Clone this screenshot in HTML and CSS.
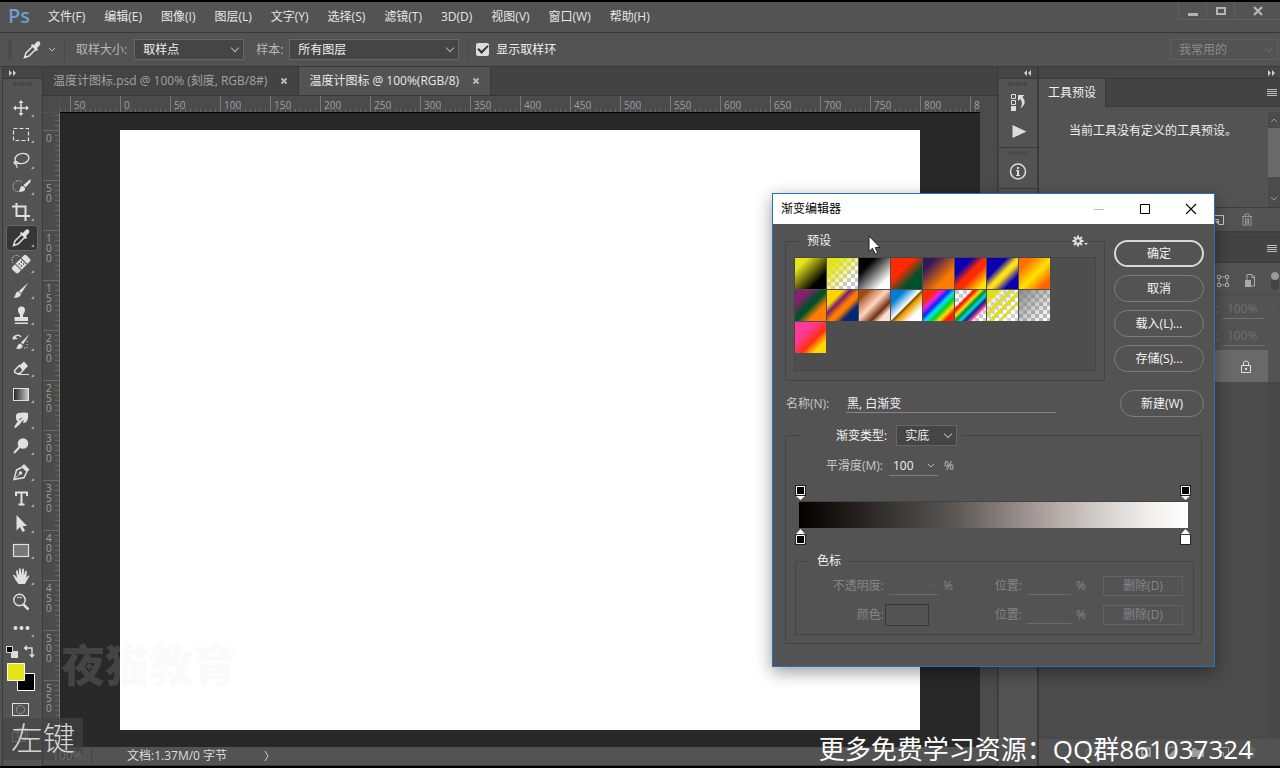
FILE: index.html
```html
<!DOCTYPE html>
<html lang="zh-CN">
<head>
<meta charset="utf-8">
<title>Ps</title>
<link rel="stylesheet" href="styles.css">
</head>
<body>
<div class="app">
  <header class="menubar">
    <span class="logo">Ps</span>
    <nav class="menus">
      <button>文件(F)</button><button>编辑(E)</button><button>图像(I)</button><button>图层(L)</button><button>文字(Y)</button><button>选择(S)</button><button>滤镜(T)</button><button>3D(D)</button><button>视图(V)</button><button>窗口(W)</button><button>帮助(H)</button>
    </nav>
    <div class="winbtns">
      <button aria-label="最小化"><svg width="12" height="12"><path d="M1 8h10v3H1z" fill="#b4b4b4"/></svg></button>
      <button aria-label="最大化"><svg width="12" height="12"><path d="M2 3h8v6H2z" fill="none" stroke="#b4b4b4" stroke-width="2"/></svg></button>
      <button class="wide" aria-label="关闭"><svg width="12" height="12"><path d="M2 2l8 8M10 2l-8 8" stroke="#b4b4b4" stroke-width="2.4"/></svg></button>
    </div>
  </header>

  <div class="options">
    <span class="vgrip"></span>
    <svg class="opt-tool" width="20" height="20" viewBox="0 0 20 20"><path d="M11 6L4 13l-1.500 4.500L7 16l7-7" fill="none" stroke="#e0e0e0" stroke-width="1.500"/><path d="M10 4l2 1 2.500-3q2-1.500 3.300 0 1.400 1.500-.3 3.500L15 8l1 2-1.500 1L9 5.500z" fill="#e0e0e0"/></svg>
    <svg class="opt-chev" width="8" height="6"><path d="M1 1l3 3 3-3" fill="none" stroke="#c0c0c0"/></svg>
    <span class="sep"></span>
    <label for="size">取样大小:</label>
    <span class="pick size"><select id="size" class="drop"><option>取样点</option></select></span>
    <label for="sample">样本:</label>
    <span class="pick sample"><select id="sample" class="drop"><option>所有图层</option></select></span>
    <span class="sep short"></span>
    <input type="checkbox" id="ring" class="check" checked>
    <label for="ring" class="bright">显示取样环</label>
    <span class="pick workspace"><select class="drop" aria-label="工作区"><option>我常用的</option></select></span>
  </div>

  <div class="main">
    <aside class="toolbox">
      <div class="colhead"><svg width="8" height="6"><path d="M1 0l3 3-3 3zM5 0l3 3-3 3z" fill="#cfcfcf"/></svg></div>
      <span class="hgrip"></span>
      <div class="tools">
        <button aria-label="移动"><svg viewBox="0 0 20 20"><path d="M10 3v14M3 10h14" stroke="#e0e0e0" stroke-width="1.500"/><path d="M10 2L7.500 5h5zM10 18l-2.500-3h5zM2 10l3-2.500v5zM18 10l-3-2.500v5z" fill="#e0e0e0"/></svg></button>
        <button aria-label="选框"><svg viewBox="0 0 20 20"><rect x="2.500" y="4.500" width="15" height="12" fill="none" stroke="#e0e0e0" stroke-width="1.200" stroke-dasharray="4 2"/></svg></button>
        <button aria-label="套索"><svg viewBox="0 0 20 20"><ellipse cx="11" cy="8.500" rx="7" ry="5" fill="none" stroke="#e0e0e0" stroke-width="1.400" transform="rotate(-12 11 8.500)"/><path d="M5 11q-3 1-1.500 2.500T7 13q-2-3-3 0 2 2 2 5" fill="none" stroke="#e0e0e0" stroke-width="1.200"/></svg></button>
        <button aria-label="快速选择"><svg viewBox="0 0 20 20"><path d="M11 6a5.500 5.500 0 1 0-2 9.500" fill="none" stroke="#e0e0e0" stroke-dasharray="1.200 1.200"/><path d="M19.500 3l-7 6 2 2.500 5-5.500zM12 10q-2.500-.5-3 2.500 0 2-1.500 2.700 3 1.300 5.500-.2 1.500-1 1-3z" fill="#e0e0e0"/></svg></button>
        <button aria-label="裁剪"><svg viewBox="0 0 20 20"><path d="M5.500 1v13H14M1 4.500h13.500V19M15 14h4" fill="none" stroke="#e0e0e0" stroke-width="2"/></svg></button>
        <button class="on" aria-label="吸管"><svg viewBox="0 0 20 20"><path d="M11 6L4 13l-1.500 4.500L7 16l7-7" fill="none" stroke="#e0e0e0" stroke-width="1.500"/><path d="M10 4l2 1 2.500-3q2-1.500 3.300 0 1.400 1.500-.3 3.500L15 8l1 2-1.500 1L9 5.500z" fill="#e0e0e0"/></svg></button>
        <button aria-label="修复画笔"><svg viewBox="0 0 20 20"><path d="M2 9a4.500 4.500 0 0 1 7-6" fill="none" stroke="#e0e0e0" stroke-dasharray="1.200 1.200"/><g transform="rotate(-45 10 10)"><rect x="0" y="6" width="20" height="8.500" rx="2" fill="#e0e0e0"/><path d="M6 6v8.500M14 6v8.500" stroke="#4a4a4a"/><path d="M8 8h1.500v1.500H8zM11 8h1.500v1.500H11zM8 11h1.500v1.500H8zM11 11h1.500v1.500H11z" fill="#4a4a4a"/></g></svg></button>
        <button aria-label="画笔"><svg viewBox="0 0 20 20"><path d="M17.500 2.500L8 11l2.200 2.300zM7.500 11.500q-2.500 0-3 3Q4 17 2 17.500q4 1 6.500-1 2-1.500 1.200-3z" fill="#e0e0e0"/></svg></button>
        <button aria-label="图章"><svg viewBox="0 0 20 20"><path d="M9 9q-2.500-3-2-5a3.500 3.500 0 0 1 7 0q0 2-2 5v2h5v4H3.500v-4H9zM4 16.500h13V18H4z" fill="#e0e0e0"/></svg></button>
        <button aria-label="历史画笔"><svg viewBox="0 0 20 20"><path d="M18.500 2L10 10.500l2 2zM9.500 11.500q-2.500 0-3 2.500-.5 2-2 2.500 4 1 6-.5 1.500-1 1-2.500z" fill="#e0e0e0"/><path d="M2 6q5-5 8-1" fill="none" stroke="#e0e0e0" stroke-width="1.300"/><path d="M1 7.500l6-.5-4-3z" fill="#e0e0e0"/><path d="M16 9v7h-4" fill="none" stroke="#e0e0e0" stroke-dasharray="1 2"/></svg></button>
        <button aria-label="橡皮擦"><svg viewBox="0 0 20 20"><path d="M4 12l4.500-4.500 4 4L9 15.500H5.500L3.500 14z" fill="none" stroke="#e0e0e0" stroke-width="1.500"/><path d="M8 8l5-4.500 4 4.500-5 5z" fill="#e0e0e0"/><path d="M7 16.500h11" stroke="#e0e0e0"/></svg></button>
        <button aria-label="渐变"><svg viewBox="0 0 20 20"><defs><linearGradient id="tg"><stop stop-color="#222"/><stop offset="1" stop-color="#ccc"/></linearGradient></defs><rect x="2.500" y="4.500" width="15" height="12" fill="url(#tg)" stroke="#e0e0e0"/></svg></button>
        <button aria-label="涂抹"><svg viewBox="0 0 20 20"><path d="M5 5q1-2.500 5-2.300 4.500-.7 7 .3.500 5-1 8-1.500 2.500-4 2 1-2 .5-3Q10 12 9 14l-4.500 4q-1.500 0-1-1.700L7 11q-2.500 0-2-6z" fill="#e0e0e0"/><path d="M8 10l3-2" stroke="#555"/></svg></button>
        <button aria-label="减淡"><svg viewBox="0 0 20 20"><circle cx="12" cy="7.500" r="5.300" fill="#e0e0e0"/><path d="M8.500 11L3 17" stroke="#e0e0e0" stroke-width="2"/></svg></button>
        <button aria-label="钢笔"><svg viewBox="0 0 20 20"><path d="M3 17.500L5.500 8l6-3 4.500 4.500-3 6z" fill="none" stroke="#e0e0e0" stroke-width="1.500"/><path d="M11 4l2-2 5.500 5.500-2 2z" fill="#e0e0e0"/><path d="M3 17.500l6-6" stroke="#e0e0e0"/><circle cx="9.500" cy="11" r="1.700" fill="#e0e0e0"/></svg></button>
        <button aria-label="文字"><svg viewBox="0 0 20 20"><path d="M5 8V4.500h11V8M10.500 4v12M7.500 16.500h6" fill="none" stroke="#e0e0e0" stroke-width="2"/></svg></button>
        <button aria-label="路径选择"><svg viewBox="0 0 20 20"><path d="M5.500 1v15.500l3.500-3.500 2.500 5 2.500-1.200-2.400-4.800h4.400z" fill="#e0e0e0"/></svg></button>
        <button aria-label="矩形"><svg viewBox="0 0 20 20"><rect x="2.500" y="4.500" width="15" height="12" fill="#777" stroke="#e0e0e0" stroke-width="1.200"/></svg></button>
        <button aria-label="抓手"><svg viewBox="0 0 20 20"><path d="M2 9q1.500-.6 2.500 1L6 12 5 5q1-1.500 1.800 0L8 9.500V3q1-1.300 1.800 0L10.300 9l1-6q1.200-1 1.700.2L12.800 9.500 14.300 5q1.200-.8 1.500.3L15.300 12l1.500-2q1.300-1 1.700 0Q15.500 15 14 18H7.500Q4.500 15 2 9z" fill="#e0e0e0"/></svg></button>
        <button class="plain" aria-label="缩放"><svg viewBox="0 0 20 20"><circle cx="8.500" cy="8" r="5.700" fill="none" stroke="#e0e0e0" stroke-width="1.500"/><path d="M12.500 12.500l5 5" stroke="#e0e0e0" stroke-width="2.500"/><path d="M6 6q2-2 5 0" fill="none" stroke="#e0e0e0"/></svg></button>
        <button aria-label="更多"><svg viewBox="0 0 20 20"><g fill="#e0e0e0"><circle cx="4.500" cy="10" r="2"/><circle cx="10.500" cy="10" r="2"/><circle cx="16.500" cy="10" r="2"/></g></svg></button>
      </div>
      <svg class="colors" viewBox="0 0 37 98">
        <path d="M8 10h7v7H8z" fill="#ddd"/><path d="M3.500 5.500h6v6h-6z" fill="#000" stroke="#ddd"/>
        <path d="M23 7h6v7" fill="none" stroke="#ddd" stroke-width="1.400"/><path d="M20.500 7l3.500-3v6zM29 17l-3-3.500h6z" fill="#ddd"/>
        <path d="M14.500 32.500h17v17h-17z" fill="#000" stroke="#fff"/><path d="M4.500 22.500h17v17h-17z" fill="#e4e41a" stroke="#fff"/>
        <rect x="9.500" y="62.500" width="16" height="12" fill="none" stroke="#e0e0e0"/><circle cx="17.500" cy="68.500" r="4" fill="none" stroke="#e0e0e0" stroke-dasharray="1 1.200"/>
        <g opacity=".6"><rect x="9.500" y="91.500" width="13" height="9" fill="none" stroke="#ddd"/><rect x="14.500" y="87.500" width="10" height="9" fill="none" stroke="#ddd"/></g>
      </svg>
    </aside>

    <main class="doc">
      <div class="tabs">
        <div class="tab"><span>温度计图标.psd @ 100% (刻度, RGB/8#)</span><button aria-label="关闭标签"><svg width="8" height="8"><path d="M1.500 1.500l5 5M6.500 1.500l-5 5" stroke="#bbb" stroke-width="1.800"/></svg></button></div>
        <div class="tab active"><span>温度计图标 @ 100%(RGB/8)</span><button aria-label="关闭标签"><svg width="8" height="8"><path d="M1.500 1.500l5 5M6.500 1.500l-5 5" stroke="#bbb" stroke-width="1.800"/></svg></button></div>
      </div>
      <div class="work">
        <div class="corner"></div>
        <div class="hruler"><i class="lead"></i><span>50</span><span>0</span><span>50</span><span>100</span><span>150</span><span>200</span><span>250</span><span>300</span><span>350</span><span>400</span><span>450</span><span>500</span><span>550</span><span>600</span><span>650</span><span>700</span><span>750</span><span>800</span><span>8</span></div>
        <div class="filler"></div>
        <div class="vruler"><i class="lead"></i><span>0</span><span>50</span><span>100</span><span>150</span><span>200</span><span>250</span><span>300</span><span>350</span><span>400</span><span>450</span><span>500</span><span>550</span><span></span></div>
        <div class="stage"><div class="artboard"></div><div class="mark">夜猫教育</div></div>
        <div class="filler"></div>
      </div>
      <footer class="status"><span class="zoom">100%</span><span class="size-info">文档:1.37M/0 字节</span><svg width="6" height="12"><path d="M1 1l3 5-3 5" fill="none" stroke="#ccc"/></svg></footer>
    </main>

    <aside class="strip">
      <div class="colhead end"><svg width="8" height="6"><path d="M3 0L0 3l3 3zM7 0L4 3l3 3z" fill="#cfcfcf"/></svg></div>
      <div class="group">
        <span class="hgrip"></span>
        <button aria-label="历史记录"><svg width="18" height="18"><path d="M2.500 1.500h4v4h-4zM2.500 7.500h4v4h-4z" fill="none" stroke="#ddd"/><path d="M2 13h5v5H2z" fill="#ddd"/><path d="M9 2h6.500l-2 2q5 6-1.500 11-1 0 0-1 2-4-.5-8L9 8z" fill="#ddd"/></svg></button>
        <button aria-label="动作"><svg width="18" height="18"><path d="M3.500 2l14 6.500-14 6.500z" fill="#ddd"/></svg></button>
      </div>
      <div class="group">
        <span class="hgrip"></span>
        <button class="tall" aria-label="信息"><svg width="18" height="18"><circle cx="9" cy="8.500" r="7.500" fill="none" stroke="#ddd" stroke-width="1.500"/><path d="M8 4h2v2H8zM7 7h3v5h1v1H7v-1h1V8H7z" fill="#ddd"/></svg></button>
      </div>
    </aside>

    <aside class="panels">
      <div class="colhead end"><svg width="8" height="6"><path d="M1 0l3 3-3 3zM5 0l3 3-3 3z" fill="#cfcfcf"/></svg></div>
      <section class="presets-panel">
        <div class="ptabs"><h2>工具预设</h2><button aria-label="面板菜单"><svg width="10" height="8"><path d="M0 .5h10M0 2.500h10M0 4.500h10M0 6.500h10" stroke="#bbb"/></svg></button></div>
        <div class="pbody"><p>当前工具没有定义的工具预设<span class="mid">。</span></p>
          <div class="scroll"><svg width="8" height="5"><path d="M1 4l3-3 3 3" fill="none" stroke="#999"/></svg><i></i><svg width="8" height="5"><path d="M1 1l3 3 3-3" fill="none" stroke="#999"/></svg></div></div>
        <div class="pfoot"><button aria-label="新建预设"><svg width="14" height="14"><path d="M1.500 2.500h10v9h-5v-5h-5z" fill="none" stroke="#ccc"/><path d="M3 8l3.500 3.500V8z" fill="#ccc"/></svg></button><button aria-label="删除预设"><svg width="12" height="13"><path d="M1 3.500h10M4 3V1h4v2M2 4v8h8V4M4.500 5v6M6 5v6M7.500 5v6" fill="none" stroke="#999"/></svg></button></div>
      </section>
      <section class="layers">
        <div class="ptabs"><button aria-label="图层菜单"><svg width="10" height="8"><path d="M0 .5h10M0 2.500h10M0 4.500h10M0 6.500h10" stroke="#bbb"/></svg></button></div>
        <div class="filters">
          <svg width="12" height="12"><path d="M2 2h8v8H2z" fill="none" stroke="#aaa"/><path d="M.5.5h3v3h-3zM8.500.5h3v3h-3zM.5 8.500h3v3h-3zM8.500 8.500h3v3h-3z" fill="#535353" stroke="#aaa"/></svg>
          <svg width="12" height="13"><path d="M3 6V.5h5L10.500 3v9H7M8 1v2.500h3" fill="none" stroke="#aaa"/><path d="M1 6h6v7H1z" fill="#aaa"/></svg>
          <svg width="8" height="18"><rect width="8" height="18" rx="4" fill="#444"/><circle cx="4" cy="4" r="4" fill="#999"/></svg>
        </div>
        <div class="percent"><label for="op">:</label><input id="op" value="100%" disabled><svg width="8" height="5"><path d="M1 1l3 3 3-3" fill="none" stroke="#626262"/></svg></div>
        <div class="percent"><label for="fill">:</label><input id="fill" value="100%" disabled><svg width="8" height="5"><path d="M1 1l3 3 3-3" fill="none" stroke="#626262"/></svg></div>
        <div class="layer"><svg width="12" height="13"><path d="M1.500 5.500h9v7h-9zM3.500 5V3q0-2 2.500-2t2.500 2v2" fill="none" stroke="#ddd"/><path d="M5 8h2v2H5z" fill="#ddd"/></svg></div>
        <div class="space"></div>
        <div class="lfoot">
          <svg width="14" height="12"><path d="M6 3H3a3 3 0 0 0 0 6h3M8 3h3a3 3 0 0 1 0 6H8M4 6h6" fill="none" stroke="#888"/></svg>
          <svg width="12" height="12"><path d="M2 3l7 7M9 3l-7 7" stroke="#777"/></svg>
          <svg width="12" height="12"><path d="M1 1h10v10H1z" fill="#ccc"/><circle cx="6" cy="6" r="3" fill="#555"/></svg>
          <svg width="12" height="12"><circle cx="6" cy="6" r="5" fill="none" stroke="#ccc"/><path d="M2.500 9.500l7-7a5 5 0 0 1-7 7z" fill="#ccc"/></svg>
          <svg width="12" height="12"><path d="M0 2h4l1 2h7v7H0z" fill="#ccc"/></svg>
          <svg width="12" height="12"><path d="M1.500 1.500h9v9h-5v-4h-4z" fill="none" stroke="#ccc"/></svg>
          <svg width="12" height="12"><path d="M1 3.500h10M4 3V1h4v2M2 4v7h8V4M5 5v5M7 5v5" fill="none" stroke="#888"/></svg>
        </div>
      </section>
    </aside>
  </div>
</div>

<div class="dialog" role="dialog" aria-labelledby="dtitle">
  <div class="dtitle"><h1 id="dtitle">渐变编辑器</h1>
    <button aria-label="最小化"><svg width="12" height="12"><path d="M1 6.500h10" stroke="#bbb"/></svg></button>
    <button aria-label="最大化"><svg width="12" height="12"><path d="M1.500 1.500h9v9h-9z" fill="none" stroke="#000"/></svg></button>
    <button aria-label="关闭"><svg width="12" height="12"><path d="M1 1l10 10M11 1L1 11" stroke="#000" stroke-width="1.100"/></svg></button>
  </div>
  <div class="dbody">
    <div class="top">
      <fieldset class="presets">
        <legend>预设</legend>
        <button class="gear" aria-label="预设菜单"><svg width="16" height="12"><path d="M6 .5v11M.5 6h11M2 2l8 8M10 2l-8 8" stroke="#ddd" stroke-width="2"/><circle cx="6" cy="6" r="3.800" fill="#ddd"/><circle cx="6" cy="6" r="1.800" fill="#535353"/><path d="M12 8h4l-2 2z" fill="#ddd"/></svg></button>
        <div class="swatches">
          <button class="g1" aria-label="前景到背景"></button><button class="g2" aria-label="前景到透明"></button><button class="g3" aria-label="黑白"></button><button class="g4" aria-label="红绿"></button><button class="g5" aria-label="紫橙"></button><button class="g6" aria-label="蓝红黄"></button><button class="g7" aria-label="蓝黄蓝"></button><button class="g8" aria-label="橙黄橙"></button><button class="g9" aria-label="紫绿橙"></button><button class="g10" aria-label="黄紫橙蓝"></button><button class="g11" aria-label="铜色"></button><button class="g12" aria-label="铬黄"></button><button class="g13" aria-label="色谱"></button><button class="g14" aria-label="透明彩虹"></button><button class="g15" aria-label="透明条纹"></button><button class="g16" aria-label="中灰密度"></button><button class="g17" aria-label="粉红黄"></button>
        </div>
      </fieldset>
      <div class="actions"><button class="pill primary">确定</button><button class="pill">取消</button><button class="pill">载入(L)...</button><button class="pill">存储(S)...</button></div>
    </div>
    <div class="name"><label for="nm">名称(N):</label><input id="nm" value="黑, 白渐变"><button class="pill">新建(W)</button></div>
    <fieldset class="editor">
      <legend><label for="type">渐变类型:</label><span class="pick type"><select id="type" class="drop"><option>实底</option></select></span></legend>
      <div class="smooth"><label for="sm">平滑度(M):</label><span class="combo"><input id="sm" value="100"><svg width="8" height="5"><path d="M1 1l3 3 3-3" fill="none" stroke="#bbb"/></svg></span><span>%</span></div>
      <div class="ramp">
        <div class="stops">
          <svg width="11" height="16"><path d="M1 1h9v9H1z" fill="#000" stroke="#222" stroke-width="2"/><path d="M1.500 1.500h8v8h-8z" fill="#000" stroke="#fff"/><path d="M1 11h9l-4.500 4z" fill="#fff"/></svg>
          <svg width="11" height="16"><path d="M1 1h9v9H1z" fill="#000" stroke="#222" stroke-width="2"/><path d="M1.500 1.500h8v8h-8z" fill="#000" stroke="#fff"/><path d="M1 11h9l-4.500 4z" fill="#fff"/></svg>
        </div>
        <div class="bar"></div>
        <div class="stops">
          <svg width="11" height="16"><path d="M1 5h9L5.500 0z" fill="#fff"/><path d="M0 5.500h11V16H0z" fill="#222"/><path d="M1.500 6.500h8v8h-8z" fill="#000" stroke="#fff"/></svg>
          <svg width="11" height="16"><path d="M1 5h9L5.500 0z" fill="#fff"/><path d="M0 5.500h11V16H0z" fill="#222"/><path d="M1 6h9v9H1z" fill="#fff"/></svg>
        </div>
      </div>
      <fieldset class="stopbox">
        <legend>色标</legend>
        <div class="srow"><label for="so">不透明度:</label><span class="combo"><input id="so" disabled><svg width="8" height="5"><path d="M1 1l3 3 3-3" fill="none" stroke="#606060"/></svg></span><span>%</span><label for="p1">位置:</label><input id="p1" disabled><span>%</span><button disabled>删除(D)</button></div>
        <div class="srow"><label for="sc">颜色:</label><button id="sc" class="color" disabled></button><span></span><label for="p2">位置:</label><input id="p2" disabled><span>%</span><button disabled>删除(D)</button></div>
      </fieldset>
    </fieldset>
  </div>
</div>

<svg class="cursor" width="14" height="20"><path d="M1 1v15.500l3.500-3.200 2.600 5.700 2.600-1.200L7.200 12.500H12z" fill="#fff" stroke="#222"/></svg>
<div class="keyhint">左键</div>
<div class="caption">更多免费学习资源<span class="mid">：</span>QQ群861037324</div>
</body>
</html>
```

FILE: styles.css
```css
* { box-sizing: border-box; }
body { margin: 0; height: 100vh; overflow: hidden; background: #000; color: #d6d6d6; font: 12px/16px "Open Sans", "Noto Sans CJK SC", sans-serif; }
button, input, select { font: inherit; color: inherit; margin: 0; padding: 0; border: 0; background: none; border-radius: 0; }
h1, h2, p { margin: 0; font: inherit; }
svg { display: block; flex: none; }
.mid { font-family: "Noto Sans CJK TC", sans-serif; }
.app { height: 100vh; padding: 2px 0; display: flex; flex-direction: column; background: #000; }

.menubar { height: 31px; flex: none; display: flex; background: #535353; border-bottom: 1px solid #383838; }
.logo { width: 40px; padding-left: 8px; font: 600 20px/27px "Open Sans", sans-serif; color: #6f9cd2; }
.menus { display: flex; align-items: center; gap: 3px; flex: 1; }
.menus button { padding: 0 8px; color: #e6e6e6; line-height: 28px; height: 28px; }
.winbtns { display: flex; height: 18px; }
.winbtns button { width: 28px; border: 1px solid #606060; border-top: 0; border-right: 0; display: flex; align-items: center; justify-content: center; }
.winbtns .wide { width: 46px; }

.options { height: 34px; flex: none; display: flex; align-items: center; background: #535353; border-bottom: 1px solid #383838; padding: 0 2px 0 8px; color: #b8b8b8; }
.vgrip { width: 4px; height: 20px; background: repeating-linear-gradient(#444 0 1px, transparent 1px 2px); }
.opt-tool { margin: 0 6px 0 10px; }
.sep { width: 1px; height: 26px; background: #4a4a4a; margin: 0 11px 0 8px; }
.sep.short { margin: 0 8px; }
.pick { position: relative; display: block; flex: none; }
.pick::after { content: ""; position: absolute; right: 6px; top: 6px; width: 5px; height: 5px; border: solid #b4b4b4; border-width: 0 1px 1px 0; transform: rotate(45deg); pointer-events: none; }
.drop { appearance: none; display: block; width: 100%; height: 21px; padding: 0 18px 0 8px; border: 1px solid #666; color: #f0f0f0; background: #454545; }
.size { width: 110px; margin: 0 12px 0 7px; }
.sample { width: 170px; margin-left: 6px; }
.check { appearance: none; width: 13px; height: 13px; background: #dcdcdc; border-radius: 2px; margin-right: 7px; display: grid; place-items: center; }
.check::before { content: ""; width: 8px; height: 4px; border: solid #333; border-width: 0 0 2px 2px; transform: rotate(-45deg); margin-bottom: 3px; }
.bright { color: #f0f0f0; }
.workspace { width: 108px; margin-left: auto; }
.workspace .drop { background: #535353; border-color: #5f5f5f; color: #8c8c8c; }
.workspace::after { border-color: #666; }

.main { flex: 1; min-height: 0; display: flex; background: #535353; }
.colhead { height: 12px; background: #454545; border-bottom: 1px solid #383838; display: flex; align-items: center; padding: 0 5px; flex: none; }
.colhead.end { justify-content: flex-end; }
.hgrip { display: block; width: 20px; height: 4px; margin: 3px auto 0; background: repeating-linear-gradient(90deg, #414141 0 1px, transparent 1px 2px); }
.toolbox { width: 41px; flex: none; margin-left: 2px; border: solid #3a3a3a; border-width: 0 1px; display: flex; flex-direction: column; overflow: hidden; }
.tools { display: flex; flex-direction: column; align-items: flex-start; margin-top: 9px; padding-left: 3px; }
.tools button { width: 32px; height: 26px; position: relative; display: grid; place-items: center; padding-right: 2px; border: 1px solid transparent; }
.tools svg { width: 20px; height: 20px; }
.tools button::after { content: ""; position: absolute; right: 3px; bottom: 3px; border: solid transparent; border-width: 3px 0 0 3px; border-bottom: 3px solid #aaa; border-top: 0; }
.tools .plain::after { display: none; }
.tools .on { background: #363636; border-color: #666; border-radius: 3px; }
.colors { width: 37px; flex: none; overflow: visible; }

.doc { flex: 1; min-width: 0; display: flex; flex-direction: column; border-right: 1px solid #3a3a3a; background: #4b4b4b; }
.tabs { height: 29px; flex: none; display: flex; background: #434343; border-bottom: 1px solid #383838; }
.tab { display: flex; align-items: center; gap: 13px; padding: 0 10px; border-right: 1px solid #383838; color: #a2a2a2; white-space: nowrap; }
.tab.active { background: #535353; color: #e8e8e8; }
.work { flex: 1; min-height: 0; display: grid; grid-template: 17px minmax(0, 1fr) / 17px minmax(0, 1fr) 17px; background: #4b4b4b; }
.corner { border: dotted #5c5c5c; border-width: 0 1px 1px 0; }
.hruler { display: flex; overflow: hidden; border-bottom: 1px solid #000; color: #a0a0a0; font-size: 10px; }
.hruler span { flex: none; width: 50px; padding-left: 3px; line-height: 18px; border-left: 1px solid #777; background: repeating-linear-gradient(90deg, #686868 0 1px, transparent 1px 5px) 4px 100% / 100% 3px no-repeat; }
.hruler .lead { flex: none; width: 10px; background: repeating-linear-gradient(90deg, #686868 0 1px, transparent 1px 5px) 0 100% / 100% 3px no-repeat; }
.vruler { overflow: hidden; border-right: 1px solid #777; color: #a0a0a0; font-size: 10px; display: flex; flex-direction: column; }
.vruler span { flex: none; height: 50px; width: 100%; padding: 2px 7px 0 3px; line-height: 10px; word-break: break-all; border-top: 1px solid #6a6a6a; background: repeating-linear-gradient(#666 0 1px, transparent 1px 5px) 100% 4px / 4px 100% no-repeat; }
.vruler .lead { flex: none; height: 17px; background: repeating-linear-gradient(#666 0 1px, transparent 1px 5px) 100% 2px / 4px 100% no-repeat; }
.stage { background: #282828; position: relative; overflow: hidden; padding: 17px 60px; }
.artboard { width: 800px; height: 600px; background: #fff; }
.mark { position: absolute; left: 1px; bottom: 54px; font: 900 44px/60px "Noto Sans CJK SC", sans-serif; background: linear-gradient(90deg, #444 59px, #fafafa 59px); background-clip: text; color: transparent; }
.status { height: 19px; flex: none; display: flex; align-items: center; background: #535353; border-bottom: 1px solid #3a3a3a; color: #dcdcdc; }
.zoom { width: 48px; padding-left: 9px; color: #b4b4b4; }
.size-info { width: 173px; padding-left: 35px; border-left: 1px solid #444; }

.strip { width: 40px; flex: none; border-right: 1px solid #3a3a3a; border-left: 1px solid #444; }
.group { border-bottom: 1px solid #3a3a3a; display: flex; flex-direction: column; align-items: center; }
.group button { height: 30px; display: grid; place-items: center; }
.group .hgrip { margin-bottom: 1px; }
.group .tall { height: 32px; }

.panels { width: 242px; flex: none; display: flex; flex-direction: column; border-left: 1px solid #3a3a3a; }
.ptabs { height: 28px; flex: none; display: flex; align-items: center; background: #434343; border-bottom: 1px solid #3a3a3a; padding-right: 3px; }
.ptabs h2 { align-self: stretch; line-height: 27px; padding: 0 9px; background: #535353; color: #f0f0f0; margin-bottom: -1px; border-right: 1px solid #3a3a3a; }
.ptabs button { margin-left: auto; }
.pbody { height: 100px; display: flex; justify-content: space-between; color: #ededed; }
.pbody p { padding: 15px 0 0 30px; white-space: nowrap; }
.scroll { width: 12px; margin-top: 5px; background: #4b4b4b; display: flex; flex-direction: column; align-items: center; justify-content: space-between; padding: 6px 0; }
.scroll i { width: 100%; height: 49px; background: #696969; margin-bottom: 14px; }
.pfoot { height: 26px; border: solid #3e3e3e; border-width: 1px 0 2px; display: flex; justify-content: flex-end; align-items: center; gap: 15px; padding-right: 27px; }
.presets-panel { border-bottom: 2px solid #444; }
.layers { flex: 1; min-height: 0; display: flex; flex-direction: column; }
.filters { height: 32px; flex: none; display: flex; align-items: center; justify-content: flex-end; gap: 15px; padding: 4px 1px 0 0; border-bottom: 1px solid #4a4a4a; }
.percent { height: 27px; flex: none; display: flex; align-items: center; justify-content: flex-end; gap: 4px; padding-right: 3px; color: #777; }
.percent input { width: 42px; height: 20px; padding-left: 4px; border-bottom: 1px solid #707070; color: #707070; }
.layer { height: 32px; flex: none; margin: 1px 12px 0 0; background: #696969; display: flex; align-items: center; justify-content: flex-end; padding-right: 16px; }
.space { flex: 1; background: #4b4b4b; border-right: 12px solid #484848; }
.lfoot { height: 28px; flex: none; border-top: 1px solid #444; border-bottom: 1px solid #3a3a3a; display: flex; align-items: center; justify-content: flex-end; gap: 14px; padding-right: 24px; opacity: .6; }

.dialog { position: absolute; top: 193px; right: 65px; width: 443px; background: #535353; border: 1px solid #2672b8; box-shadow: 0 5px 16px rgba(0, 0, 0, .4); color: #c6c6c6; }
.dtitle { height: 30px; display: flex; align-items: center; background: #fff; color: #000; }
.dtitle h1 { flex: 1; padding-left: 8px; }
.dtitle button { width: 46px; height: 30px; display: grid; place-items: center; }
.dbody { padding: 9px 10px 22px 12px; }
fieldset { margin: 0; padding: 0; min-width: 0; border: 1px solid #454545; }
legend { color: #f4f4f4; padding: 0 7px; margin-left: 14px; }
.top { display: flex; gap: 9px; }
.presets { flex: 1; padding: 8px 8px 9px; position: relative; }
.presets > legend { margin-left: 6px; }
.gear { position: absolute; right: 16px; top: -14px; background: #535353; }
.swatches { height: 114px; border: 1px solid #464646; background: #4e4e4e; display: grid; grid-template-columns: repeat(8, 31px); grid-auto-rows: 31px; gap: 1px; }
.actions { display: flex; flex-direction: column; gap: 8px; width: 90px; padding-top: 7px; }
.pill { height: 27px; border: 1px solid #7d7d7d; border-radius: 14px; color: #f4f4f4; }
.primary { border: 2px solid #d8d8d8; }
.name { display: flex; align-items: center; margin-top: 9px; padding-left: 1px; }
.name label { width: 60px; }
.name input { flex: 0 1 210px; height: 18px; padding-left: 1px; border-bottom: 1px solid #858585; color: #f4f4f4; }
.name .pill { width: 84px; margin-left: auto; }
.editor { margin: 8px 2px 0 0; padding: 0 7px 8px 9px; }
.editor > legend { display: flex; align-items: center; gap: 9px; margin-left: 5px; padding: 0 5px 0 36px; }
.type { width: 61px; }
.smooth { display: flex; align-items: center; gap: 6px; height: 20px; margin-top: 10px; }
.smooth label { width: 88px; text-align: right; }
.combo { width: 49px; height: 19px; display: flex; align-items: center; justify-content: space-between; border-bottom: 1px solid #808080; padding: 0 3px 0 4px; }
.combo input { width: 30px; min-width: 0; color: #f0f0f0; }
.ramp { margin-top: 9px; padding-right: 3px; }
.stops { display: flex; justify-content: space-between; }
.bar { height: 27px; margin: 0 3px 1px 4px; background: linear-gradient(90deg, #050000, #1f1917 12%, #393837 25%, #5a5755 40%, #918786 55%, #b6aaa6 66%, #d2cdca 77%, #f0efee 90%, #fff); border-top: 1px solid #444; }
.stopbox { margin-top: 8px; padding: 6px 10px 9px 0; }
.srow { display: grid; grid-template-columns: 88px 49px 20px 54px 44px 22px 1fr; column-gap: 5px; align-items: center; height: 21px; color: #858585; }
.srow + .srow { margin-top: 8px; }
.srow label { text-align: right; white-space: nowrap; }
.srow > input, .srow .combo { width: 100%; height: 18px; border-bottom: 1px solid #6b6b6b; }
.srow > button { height: 20px; border: 1px solid #626262; }
.srow > .color { width: 44px; height: 22px; border-color: #383838; margin-left: -4px; }

.g1 { background: linear-gradient(135deg, #e6e61a 20%, #000 75%); }
.g2 { background: linear-gradient(135deg, #e4e41a 20%, transparent 75%), repeating-conic-gradient(#fff 0 25%, #c8c8c8 0 50%) 0 0 / 8px 8px; }
.g3 { background: linear-gradient(135deg, #000 25%, #fff 80%); }
.g4 { background: linear-gradient(135deg, #ff2a00 38%, #00502a 68%); }
.g5 { background: linear-gradient(135deg, #35165c 20%, #ff7c00 70%); }
.g6 { background: linear-gradient(135deg, #0a00b2 28%, #ff2a00 48%, #ff2a00 60%, #ffe400 88%); }
.g7 { background: linear-gradient(135deg, #0a00b2 32%, #ffe017 50%, #ffe017 57%, #0a00b2 78%); }
.g8 { background: linear-gradient(135deg, #ff7000 20%, #ffe400 53%, #ff6000 85%); }
.g9 { background: linear-gradient(135deg, #86206c 24%, #00502a 46%, #00502a 52%, #ff7c00 72%); }
.g10 { background: linear-gradient(135deg, #ffd400 26%, #7a1c70 38%, #ff7c00 52%, #ff7c00 60%, #002874 75%); }
.g11 { background: linear-gradient(135deg, #a6480c 15%, #c88058 25%, #ffd8c0 46%, #703014 69%, #ffe0d0 82%); }
.g12 { background: linear-gradient(135deg, #007cd6 22%, #fff 48%, #785000 51%, #f09c00 58%, #fff 78%); }
.g13 { background: linear-gradient(135deg, #ff2a00 20%, #f020e0 32%, #1020ff 43%, #00e4f0 53%, #00d020 64%, #ffe000 75%, #ff2000 85%); }
.g14 { background: linear-gradient(135deg, transparent 26%, #f00 32%, #ffe000 42%, #009030 50%, #00d8e8 58%, #102080 66%, #f040a0 74%, transparent 80%), repeating-conic-gradient(#fff 0 25%, #c8c8c8 0 50%) 0 0 / 8px 8px; }
.g15 { background: linear-gradient(135deg, #dede20 20%, transparent 30% 34%, #dede20 36% 42%, transparent 44% 50%, #dede20 52% 58%, transparent 60% 66%, #dede20 68% 72%, transparent 74%), repeating-conic-gradient(#fff 0 25%, #d0d0d0 0 50%) 0 0 / 8px 8px; }
.g16 { background: linear-gradient(135deg, #888, transparent 90%), repeating-conic-gradient(#fff 0 25%, #bbb 0 50%) 0 0 / 8px 8px; }
.g17 { background: linear-gradient(135deg, #ff3a98 34%, #ff3010 60%, #ffd800 80%); }

.cursor { position: absolute; left: 868px; top: 235px; }
.keyhint { position: absolute; left: 3px; bottom: 8px; padding: 0 8px; width: 80px; font: 300 32px/42px "Liberation Serif", "Noto Sans CJK SC", serif; color: #d4d4d4; background: rgba(68, 68, 68, .65); white-space: nowrap; }
.caption { position: absolute; right: 27px; bottom: 0; font-size: 26px; line-height: 38px; color: #fff; white-space: nowrap; }
```
